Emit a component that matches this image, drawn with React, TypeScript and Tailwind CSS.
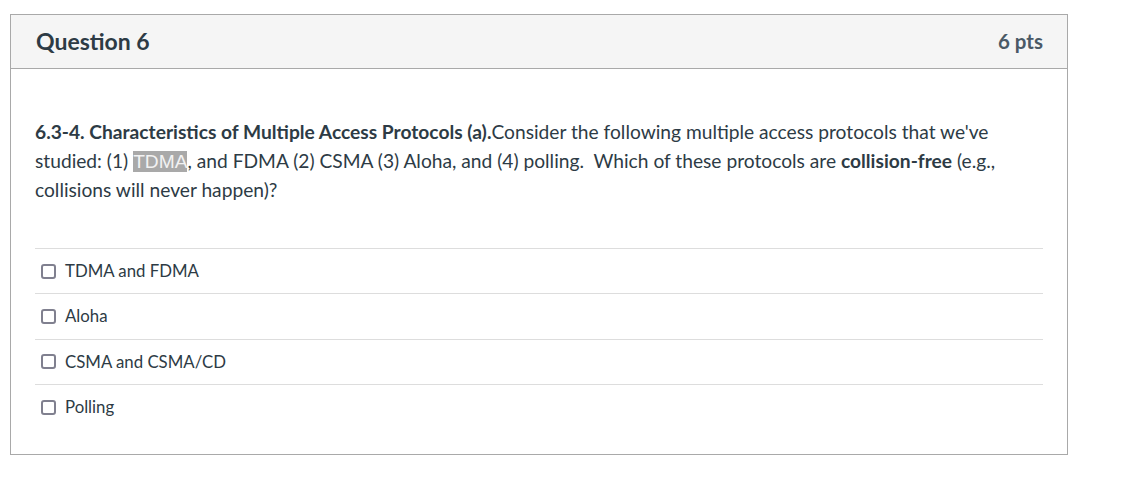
import React from "react";

const options = ["TDMA and FDMA", "Aloha", "CSMA and CSMA/CD", "Polling"];

export default function App() {
  return (
    <div className="w-[1142px] h-[481px] bg-white pt-[14px] pl-[10px]" style={{ fontFamily: "Lato, 'Helvetica Neue', Arial, sans-serif" }}>
      <div className="w-[1058px] h-[441px] border border-[#a9a9a9] text-[#2d3b45]">
        <div className="h-[54px] bg-[#f5f5f5] border-b border-[#a9a9a9] flex items-center justify-between pl-[25px] pr-[24px]">
          <span className="text-[23px] font-bold -mt-[1px]">Question 6</span>
          <span className="text-[20.5px] font-bold text-[#4a5966] -mt-[1px]">6 pts</span>
        </div>
        <div className="px-[24px] pt-[48px]">
          <p className="text-[19.2px] leading-[29px] pr-[20px]">
            <strong>6.3-4. Characteristics of Multiple Access Protocols (a).</strong>Consider the following multiple access protocols that we've studied: (1){" "}
            <span className="bg-[#a9a9a9] text-[#f2f2f2] leading-none" style={{ fontFamily: "'Liberation Sans', Arial, sans-serif" }}>TDMA</span>, and FDMA (2) CSMA (3) Aloha, and (4) polling.&nbsp; Which of these protocols are{" "}
            <strong>collision-free</strong> (e.g., collisions will never happen)?
          </p>
          <div className="mt-[44px]">
            {options.map((o) => (
              <div key={o} className="border-t border-[#dddddd] h-[45.3px] flex items-center pl-[6px]">
                <span className="w-[15px] h-[15px] border-2 border-[#80808f] rounded-[3px] shrink-0" />
                <span className="ml-[9px] text-[16.8px] -mt-[1px]">{o}</span>
              </div>
            ))}
          </div>
        </div>
      </div>
    </div>
  );
}
